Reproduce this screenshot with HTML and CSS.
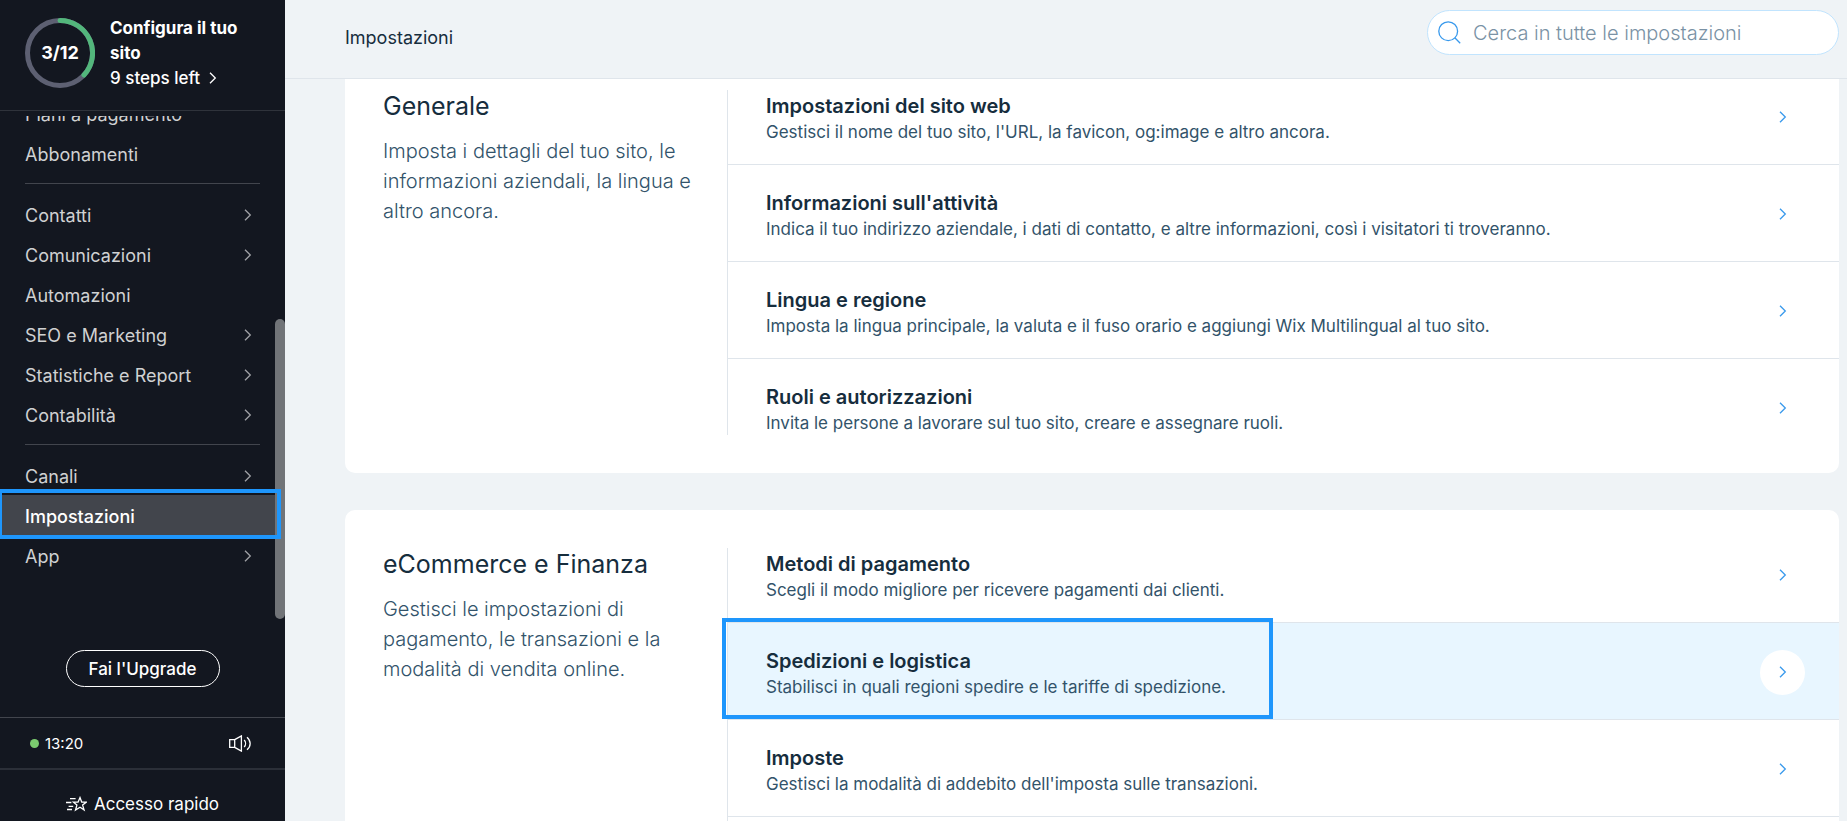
FILE: index.html
```html
<!DOCTYPE html>
<html lang="it">
<head>
  <meta charset="UTF-8" />
  <meta name="viewport" content="width=device-width, initial-scale=1.0" />
  <title>Impostazioni</title>
  <link rel="stylesheet" href="styles.css">
</head>
<body>

  <svg class="sprite" aria-hidden="true">
    <symbol id="chevron" viewBox="0 0 8 12">
      <path d="M1 .7 6.3 6 1 11.3" fill="none" stroke="currentColor" stroke-width="1.3" />
    </symbol>
  </svg>

  <aside class="sidebar">
    <a class="setup" href="#">
      <span class="ring">
        <svg width="70" height="70" viewBox="0 0 70 70">
          <circle cx="35" cy="35" r="32.5" fill="none" stroke="#5d6072" stroke-width="5" />
          <path d="M35 2.5A32.5 32.5 0 0 1 59 57" fill="none" stroke="#53b77c" stroke-width="5" stroke-linecap="round" />
        </svg>
        <span class="ring-text">3/12</span>
      </span>
      <span class="setup-text">
        <strong>Configura il tuo sito</strong>
        <span class="steps">9 steps left <svg class="chevron"><use href="#chevron" /></svg></span>
      </span>
    </a>

    <nav class="menu">
      <ul class="menu-list">
        <li><a href="#">Piani a pagamento</a></li>
        <li><a href="#">Abbonamenti</a></li>
        <li class="divider"></li>
        <li><a href="#">Contatti <svg class="chevron"><use href="#chevron" /></svg></a></li>
        <li><a href="#">Comunicazioni <svg class="chevron"><use href="#chevron" /></svg></a></li>
        <li><a href="#">Automazioni</a></li>
        <li><a href="#">SEO e Marketing <svg class="chevron"><use href="#chevron" /></svg></a></li>
        <li><a href="#">Statistiche e Report <svg class="chevron"><use href="#chevron" /></svg></a></li>
        <li><a href="#">Contabilità <svg class="chevron"><use href="#chevron" /></svg></a></li>
        <li class="divider"></li>
        <li><a href="#">Canali <svg class="chevron"><use href="#chevron" /></svg></a></li>
        <li class="active"><a href="#">Impostazioni</a></li>
        <li><a href="#">App <svg class="chevron"><use href="#chevron" /></svg></a></li>
      </ul>
    </nav>
    <div class="scrollbar"></div>

    <div class="upgrade">
      <button class="upgrade-btn" type="button">Fai l'Upgrade</button>
    </div>

    <div class="status">
      <span class="clock"><span class="dot"></span>13:20</span>
      <button class="icon-btn" type="button" aria-label="Audio">
        <svg width="22" height="17" viewBox="0 0 22 17" fill="none" stroke="#fff" stroke-width="1.3">
          <path d="M.7 4.6h5v7.8h-5zM5.7 4.6 12.4.9v15.2l-6.7-3.7M15.2 5c1.8 2 1.8 5 0 7M18 2.2c4.2 3.6 4.2 9 0 12.6" />
        </svg>
      </button>
    </div>

    <a class="quick" href="#">
      <svg width="21" height="16" viewBox="0 0 21 16" fill="none" stroke="#fff" stroke-width="1.3">
        <path d="M14 1.6 15.7 6.1l4.5.1-3.6 2.9 1.5 4.8-4.1-2.6-4.5 2.8 1.4-5L7.4 6.2l4.7-.1zM4 2.6h5.6M0 6.5h5.4M2.6 10.4h4.6M1 13.5h5" />
      </svg>
      Accesso rapido
    </a>
  </aside>

  <main class="main">
    <header class="topbar">
      <h1>Impostazioni</h1>
      <label class="search">
        <svg width="23" height="23" viewBox="0 0 23 23" fill="none" stroke="#3899ec" stroke-width="1.3">
          <circle cx="10.2" cy="10.2" r="9.4" />
          <path d="m16.8 16.8 5.4 5.4" />
        </svg>
        <input type="search" placeholder="Cerca in tutte le impostazioni" aria-label="Cerca in tutte le impostazioni">
      </label>
    </header>

    <div class="content">
      <section class="card">
        <div class="card-info">
          <h2>Generale</h2>
          <p>Imposta i dettagli del tuo sito, le informazioni aziendali, la lingua e altro ancora.</p>
        </div>
        <div class="rows">
          <a class="row" href="#">
            <span class="row-text"><b>Impostazioni del sito web</b><span>Gestisci il nome del tuo sito, l'URL, la favicon, og:image e altro ancora.</span></span>
            <span class="go"><svg class="chevron"><use href="#chevron" /></svg></span>
          </a>
          <a class="row" href="#">
            <span class="row-text"><b>Informazioni sull'attività</b><span>Indica il tuo indirizzo aziendale, i dati di contatto, e altre informazioni, così i visitatori ti troveranno.</span></span>
            <span class="go"><svg class="chevron"><use href="#chevron" /></svg></span>
          </a>
          <a class="row" href="#">
            <span class="row-text"><b>Lingua e regione</b><span>Imposta la lingua principale, la valuta e il fuso orario e aggiungi Wix Multilingual al tuo sito.</span></span>
            <span class="go"><svg class="chevron"><use href="#chevron" /></svg></span>
          </a>
          <a class="row" href="#">
            <span class="row-text"><b>Ruoli e autorizzazioni</b><span>Invita le persone a lavorare sul tuo sito, creare e assegnare ruoli.</span></span>
            <span class="go"><svg class="chevron"><use href="#chevron" /></svg></span>
          </a>
        </div>
      </section>

      <section class="card">
        <div class="card-info">
          <h2>eCommerce e Finanza</h2>
          <p>Gestisci le impostazioni di pagamento, le transazioni e la modalità di vendita online.</p>
        </div>
        <div class="rows">
          <a class="row" href="#">
            <span class="row-text"><b>Metodi di pagamento</b><span>Scegli il modo migliore per ricevere pagamenti dai clienti.</span></span>
            <span class="go"><svg class="chevron"><use href="#chevron" /></svg></span>
          </a>
          <a class="row selected" href="#">
            <span class="row-text"><b>Spedizioni e logistica</b><span>Stabilisci in quali regioni spedire e le tariffe di spedizione.</span></span>
            <span class="go"><svg class="chevron"><use href="#chevron" /></svg></span>
          </a>
          <a class="row" href="#">
            <span class="row-text"><b>Imposte</b><span>Gestisci la modalità di addebito dell'imposta sulle transazioni.</span></span>
            <span class="go"><svg class="chevron"><use href="#chevron" /></svg></span>
          </a>
          <a class="row" href="#"></a>
        </div>
      </section>
    </div>
  </main>

</body>
</html>
```
FILE: styles.css
```css
*,
*::after {
  box-sizing: border-box;
}

body {
  margin: 0;
  height: 100vh;
  display: flex;
  overflow: hidden;
  font-family: Inter, "Liberation Sans", sans-serif;
  color: #162d3d;
  background: #eff3f6;
}

a {
  color: inherit;
  text-decoration: none;
}

button {
  font-family: inherit;
  color: inherit;
  background: none;
  cursor: pointer;
}

.sprite {
  position: absolute;
  width: 0;
  height: 0;
}

.chevron {
  width: 8px;
  height: 12px;
  flex: none;
}

/* Sidebar */
.sidebar {
  position: relative;
  width: 285px;
  flex: none;
  display: flex;
  flex-direction: column;
  background: #131720;
  color: #fff;
}

.setup {
  display: flex;
  align-items: center;
  gap: 15px;
  height: 111px;
  flex: none;
  padding: 0 25px 5px;
  border-bottom: 1px solid #2f333b;
  font-size: 17px;
  line-height: 25px;
}

.setup-text {
  padding-top: 2px;
}

.setup strong {
  display: block;
  font-weight: 700;
}

.steps {
  font-weight: 500;
}

.steps .chevron {
  margin-left: 4px;
}

.ring {
  display: grid;
  place-items: center;
  flex: none;
}

.ring > * {
  grid-area: 1 / 1;
}

.ring-text {
  font-size: 18px;
  font-weight: 700;
}

.menu {
  flex: 1;
  margin-top: 5px;
  overflow: hidden;
}

.menu-list {
  list-style: none;
  margin: -23px 0 0;
  padding: 0;
}

.menu-list a {
  display: flex;
  align-items: center;
  justify-content: space-between;
  height: 40px;
  padding: 2px 33px 0 25px;
  font-size: 18px;
  color: #d0d1d2;
}

.menu-list .chevron {
  color: #a1a2a6;
}

.menu-list .divider {
  height: 1px;
  margin: 10px 25px;
  background: #42454d;
}

.menu-list .active a {
  background: #42454c;
  color: #fff;
  font-weight: 500;
}

.active {
  position: relative;
}

.active::after {
  content: "";
  position: absolute;
  z-index: 2;
  top: -6px;
  left: -2px;
  right: 4px;
  bottom: -4px;
  border: 4px solid #1e96fc;
}

.scrollbar {
  position: absolute;
  top: 319px;
  right: 0;
  width: 10px;
  height: 300px;
  border-radius: 5px;
  background: #717478;
}

.upgrade {
  display: flex;
  justify-content: center;
  padding: 0 0 30px;
}

.upgrade-btn {
  height: 37px;
  padding: 0 22px;
  border: 1px solid #fff;
  border-radius: 19px;
  font-size: 17px;
  font-weight: 500;
}

.status {
  display: flex;
  align-items: center;
  justify-content: space-between;
  height: 53px;
  padding: 0 34px 0 30px;
  border-top: 1px solid #42454d;
  border-bottom: 2px solid #2b2f38;
  font-size: 15px;
}

.clock {
  display: flex;
  align-items: center;
  gap: 6px;
}

.dot {
  width: 9px;
  height: 9px;
  border-radius: 50%;
  background: #7bcb6f;
}

.icon-btn {
  display: flex;
  padding: 0;
  border: 0;
}

.quick {
  display: flex;
  align-items: center;
  justify-content: center;
  gap: 7px;
  height: 51px;
  padding-top: 17px;
  font-size: 17px;
}

/* Main area */
.main {
  flex: 1;
  min-width: 0;
  display: flex;
  flex-direction: column;
}

.topbar {
  position: relative;
  z-index: 1;
  display: flex;
  align-items: center;
  justify-content: space-between;
  height: 79px;
  flex: none;
  padding: 0 8px 14px 60px;
  border-bottom: 1px solid #dfe5eb;
  background: #eff3f6;
}

.topbar h1 {
  margin: 10px 0 0;
  font-size: 18px;
  font-weight: 400;
}

.search {
  display: flex;
  align-items: center;
  gap: 12px;
  width: 412px;
  height: 45px;
  padding: 0 10px;
  border: 1px solid #c1e4fe;
  border-radius: 23px;
  background: #fff;
}

.search input {
  flex: 1;
  min-width: 0;
  padding: 2px 0 0;
  border: 0;
  outline: 0;
  background: none;
  font: 300 20px Inter, "Liberation Sans", sans-serif;
}

.search input::placeholder {
  color: #7a92a5;
  opacity: 1;
}

.content {
  flex: 1;
  min-height: 0;
  overflow: hidden;
  padding: 0 8px 0 60px;
}

.card {
  display: flex;
  margin-bottom: 37px;
  padding: 38px 0;
  border-radius: 10px;
  background: #fff;
}

.card:first-child {
  margin-top: -27px;
}

.card-info {
  width: 382px;
  flex: none;
  padding: 1px 30px 0 38px;
}

.card-info h2 {
  margin: 0 0 15px;
  font-size: 25px;
  line-height: 30px;
  font-weight: 400;
}

.card-info p {
  margin: 0;
  font-size: 20px;
  line-height: 30px;
  font-weight: 300;
  color: #32536a;
}

.rows {
  flex: 1;
  border-left: 1px solid #dfe5eb;
}

.row {
  position: relative;
  display: flex;
  align-items: center;
  justify-content: space-between;
  min-height: 75px;
  padding: 22px 34px 20px 38px;
  border-bottom: 1px solid #dfe5eb;
}

.row:first-child {
  padding-top: 0;
}

.row:last-child {
  padding-bottom: 0;
  border-bottom: 0;
}

.row-text {
  padding-top: 2px;
  font-size: 17px;
  line-height: 24px;
  color: #32536a;
}

.row b {
  display: block;
  font-size: 20px;
  line-height: 28px;
  font-weight: 600;
  color: #162d3d;
}

.row-text span {
  display: block;
}

.go {
  display: grid;
  place-items: center;
  width: 45px;
  height: 45px;
  border-radius: 50%;
  color: #3899ec;
}

.selected {
  background: #e8f6ff;
}

.selected .go {
  background: #fff;
}

.selected::after {
  content: "";
  position: absolute;
  top: -5px;
  left: -6px;
  bottom: 0;
  width: 551px;
  border: 4px solid #1e96fc;
}
```
